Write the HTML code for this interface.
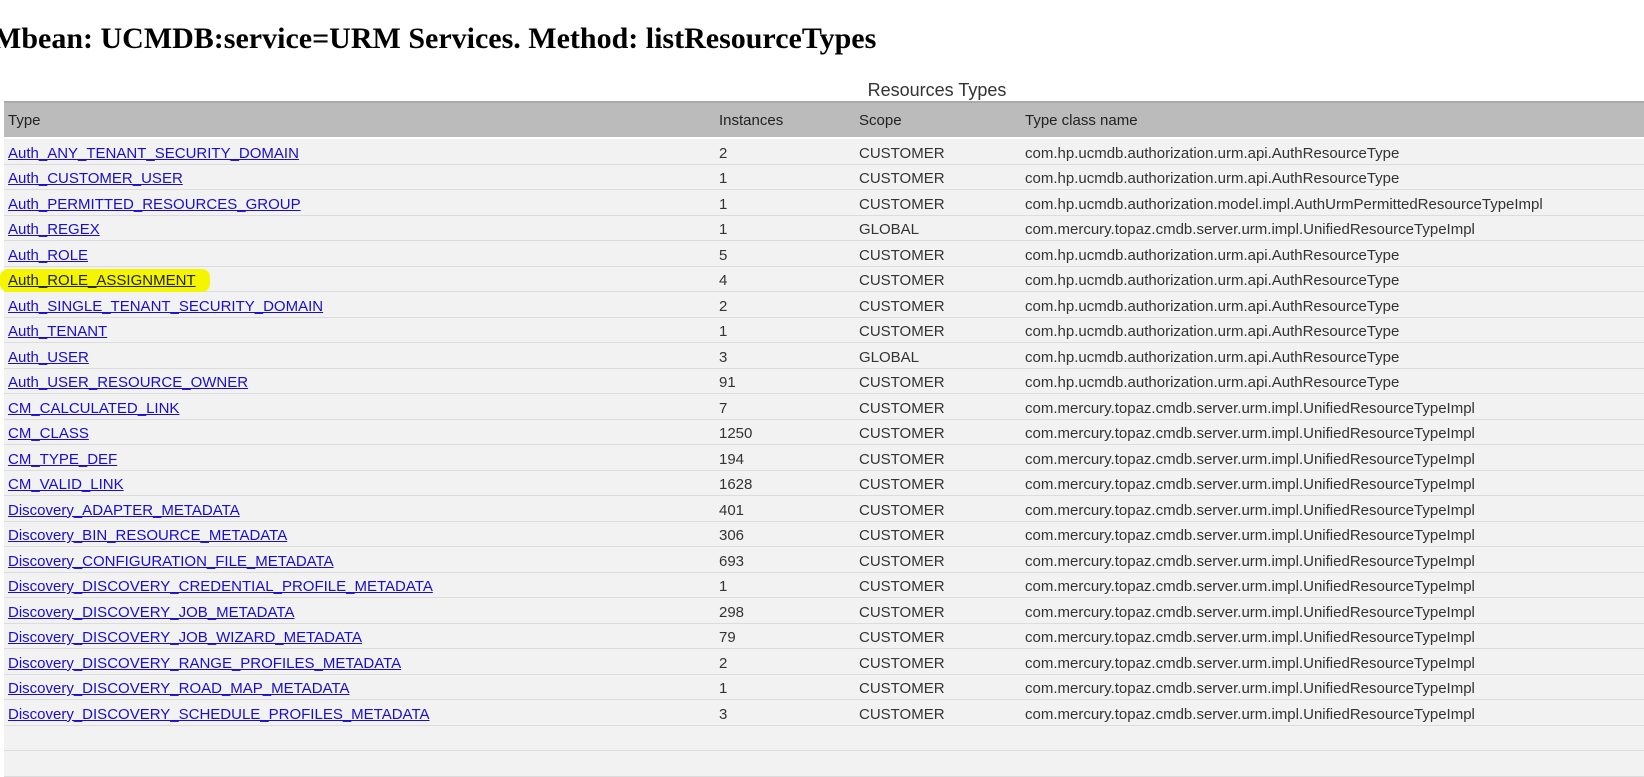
<!DOCTYPE html>
<html><head><style>
body{margin:0;background:#fff;font-family:"Liberation Sans",Arial,sans-serif;overflow:hidden;width:1644px;height:733px}
h1{position:absolute;left:-7px;top:22px;margin:0;font-family:"Liberation Serif",serif;font-size:30px;font-weight:bold;color:#000;white-space:nowrap}
.cap{position:absolute;left:0;top:80px;width:1874px;text-align:center;font-size:18px;color:#333}
table{position:absolute;left:4px;top:101px;width:1640px;border-collapse:collapse;font-size:15px;color:#333;table-layout:fixed}
th{background:#bbb;height:34px;text-align:left;font-weight:normal;padding:0 4px;color:#222;border-top:2px solid #aaa;border-bottom:2px solid #fff;vertical-align:middle}
td{background:#f2f2f2;height:20.5px;padding:4px 4px 0;border-bottom:1px solid #dcdcdc;white-space:nowrap;vertical-align:middle}
a{color:#1a0dcc;text-decoration:underline}
.hl{background:#f5f500;padding:3px 14px 3px 8px;margin-left:-8px;border-radius:8px}
</style></head><body>
<h1>Mbean: UCMDB:service=URM Services. Method: listResourceTypes</h1>
<div class="cap">Resources Types</div>
<table>
<tr><th style="width:703px">Type</th><th style="width:132px">Instances</th><th style="width:158px">Scope</th><th>Type class name</th></tr>
<tr><td><a>Auth_ANY_TENANT_SECURITY_DOMAIN</a></td><td>2</td><td>CUSTOMER</td><td>com.hp.ucmdb.authorization.urm.api.AuthResourceType</td></tr>
<tr><td><a>Auth_CUSTOMER_USER</a></td><td>1</td><td>CUSTOMER</td><td>com.hp.ucmdb.authorization.urm.api.AuthResourceType</td></tr>
<tr><td><a>Auth_PERMITTED_RESOURCES_GROUP</a></td><td>1</td><td>CUSTOMER</td><td>com.hp.ucmdb.authorization.model.impl.AuthUrmPermittedResourceTypeImpl</td></tr>
<tr><td><a>Auth_REGEX</a></td><td>1</td><td>GLOBAL</td><td>com.mercury.topaz.cmdb.server.urm.impl.UnifiedResourceTypeImpl</td></tr>
<tr><td><a>Auth_ROLE</a></td><td>5</td><td>CUSTOMER</td><td>com.hp.ucmdb.authorization.urm.api.AuthResourceType</td></tr>
<tr><td><span class="hl"><a style="color:#222">Auth_ROLE_ASSIGNMENT</a></span></td><td>4</td><td>CUSTOMER</td><td>com.hp.ucmdb.authorization.urm.api.AuthResourceType</td></tr>
<tr><td><a>Auth_SINGLE_TENANT_SECURITY_DOMAIN</a></td><td>2</td><td>CUSTOMER</td><td>com.hp.ucmdb.authorization.urm.api.AuthResourceType</td></tr>
<tr><td><a>Auth_TENANT</a></td><td>1</td><td>CUSTOMER</td><td>com.hp.ucmdb.authorization.urm.api.AuthResourceType</td></tr>
<tr><td><a>Auth_USER</a></td><td>3</td><td>GLOBAL</td><td>com.hp.ucmdb.authorization.urm.api.AuthResourceType</td></tr>
<tr><td><a>Auth_USER_RESOURCE_OWNER</a></td><td>91</td><td>CUSTOMER</td><td>com.hp.ucmdb.authorization.urm.api.AuthResourceType</td></tr>
<tr><td><a>CM_CALCULATED_LINK</a></td><td>7</td><td>CUSTOMER</td><td>com.mercury.topaz.cmdb.server.urm.impl.UnifiedResourceTypeImpl</td></tr>
<tr><td><a>CM_CLASS</a></td><td>1250</td><td>CUSTOMER</td><td>com.mercury.topaz.cmdb.server.urm.impl.UnifiedResourceTypeImpl</td></tr>
<tr><td><a>CM_TYPE_DEF</a></td><td>194</td><td>CUSTOMER</td><td>com.mercury.topaz.cmdb.server.urm.impl.UnifiedResourceTypeImpl</td></tr>
<tr><td><a>CM_VALID_LINK</a></td><td>1628</td><td>CUSTOMER</td><td>com.mercury.topaz.cmdb.server.urm.impl.UnifiedResourceTypeImpl</td></tr>
<tr><td><a>Discovery_ADAPTER_METADATA</a></td><td>401</td><td>CUSTOMER</td><td>com.mercury.topaz.cmdb.server.urm.impl.UnifiedResourceTypeImpl</td></tr>
<tr><td><a>Discovery_BIN_RESOURCE_METADATA</a></td><td>306</td><td>CUSTOMER</td><td>com.mercury.topaz.cmdb.server.urm.impl.UnifiedResourceTypeImpl</td></tr>
<tr><td><a>Discovery_CONFIGURATION_FILE_METADATA</a></td><td>693</td><td>CUSTOMER</td><td>com.mercury.topaz.cmdb.server.urm.impl.UnifiedResourceTypeImpl</td></tr>
<tr><td><a>Discovery_DISCOVERY_CREDENTIAL_PROFILE_METADATA</a></td><td>1</td><td>CUSTOMER</td><td>com.mercury.topaz.cmdb.server.urm.impl.UnifiedResourceTypeImpl</td></tr>
<tr><td><a>Discovery_DISCOVERY_JOB_METADATA</a></td><td>298</td><td>CUSTOMER</td><td>com.mercury.topaz.cmdb.server.urm.impl.UnifiedResourceTypeImpl</td></tr>
<tr><td><a>Discovery_DISCOVERY_JOB_WIZARD_METADATA</a></td><td>79</td><td>CUSTOMER</td><td>com.mercury.topaz.cmdb.server.urm.impl.UnifiedResourceTypeImpl</td></tr>
<tr><td><a>Discovery_DISCOVERY_RANGE_PROFILES_METADATA</a></td><td>2</td><td>CUSTOMER</td><td>com.mercury.topaz.cmdb.server.urm.impl.UnifiedResourceTypeImpl</td></tr>
<tr><td><a>Discovery_DISCOVERY_ROAD_MAP_METADATA</a></td><td>1</td><td>CUSTOMER</td><td>com.mercury.topaz.cmdb.server.urm.impl.UnifiedResourceTypeImpl</td></tr>
<tr><td><a>Discovery_DISCOVERY_SCHEDULE_PROFILES_METADATA</a></td><td>3</td><td>CUSTOMER</td><td>com.mercury.topaz.cmdb.server.urm.impl.UnifiedResourceTypeImpl</td></tr>
<tr><td>&nbsp;</td><td></td><td></td><td></td></tr>
<tr><td>&nbsp;</td><td></td><td></td><td></td></tr>
</table>
</body></html>
